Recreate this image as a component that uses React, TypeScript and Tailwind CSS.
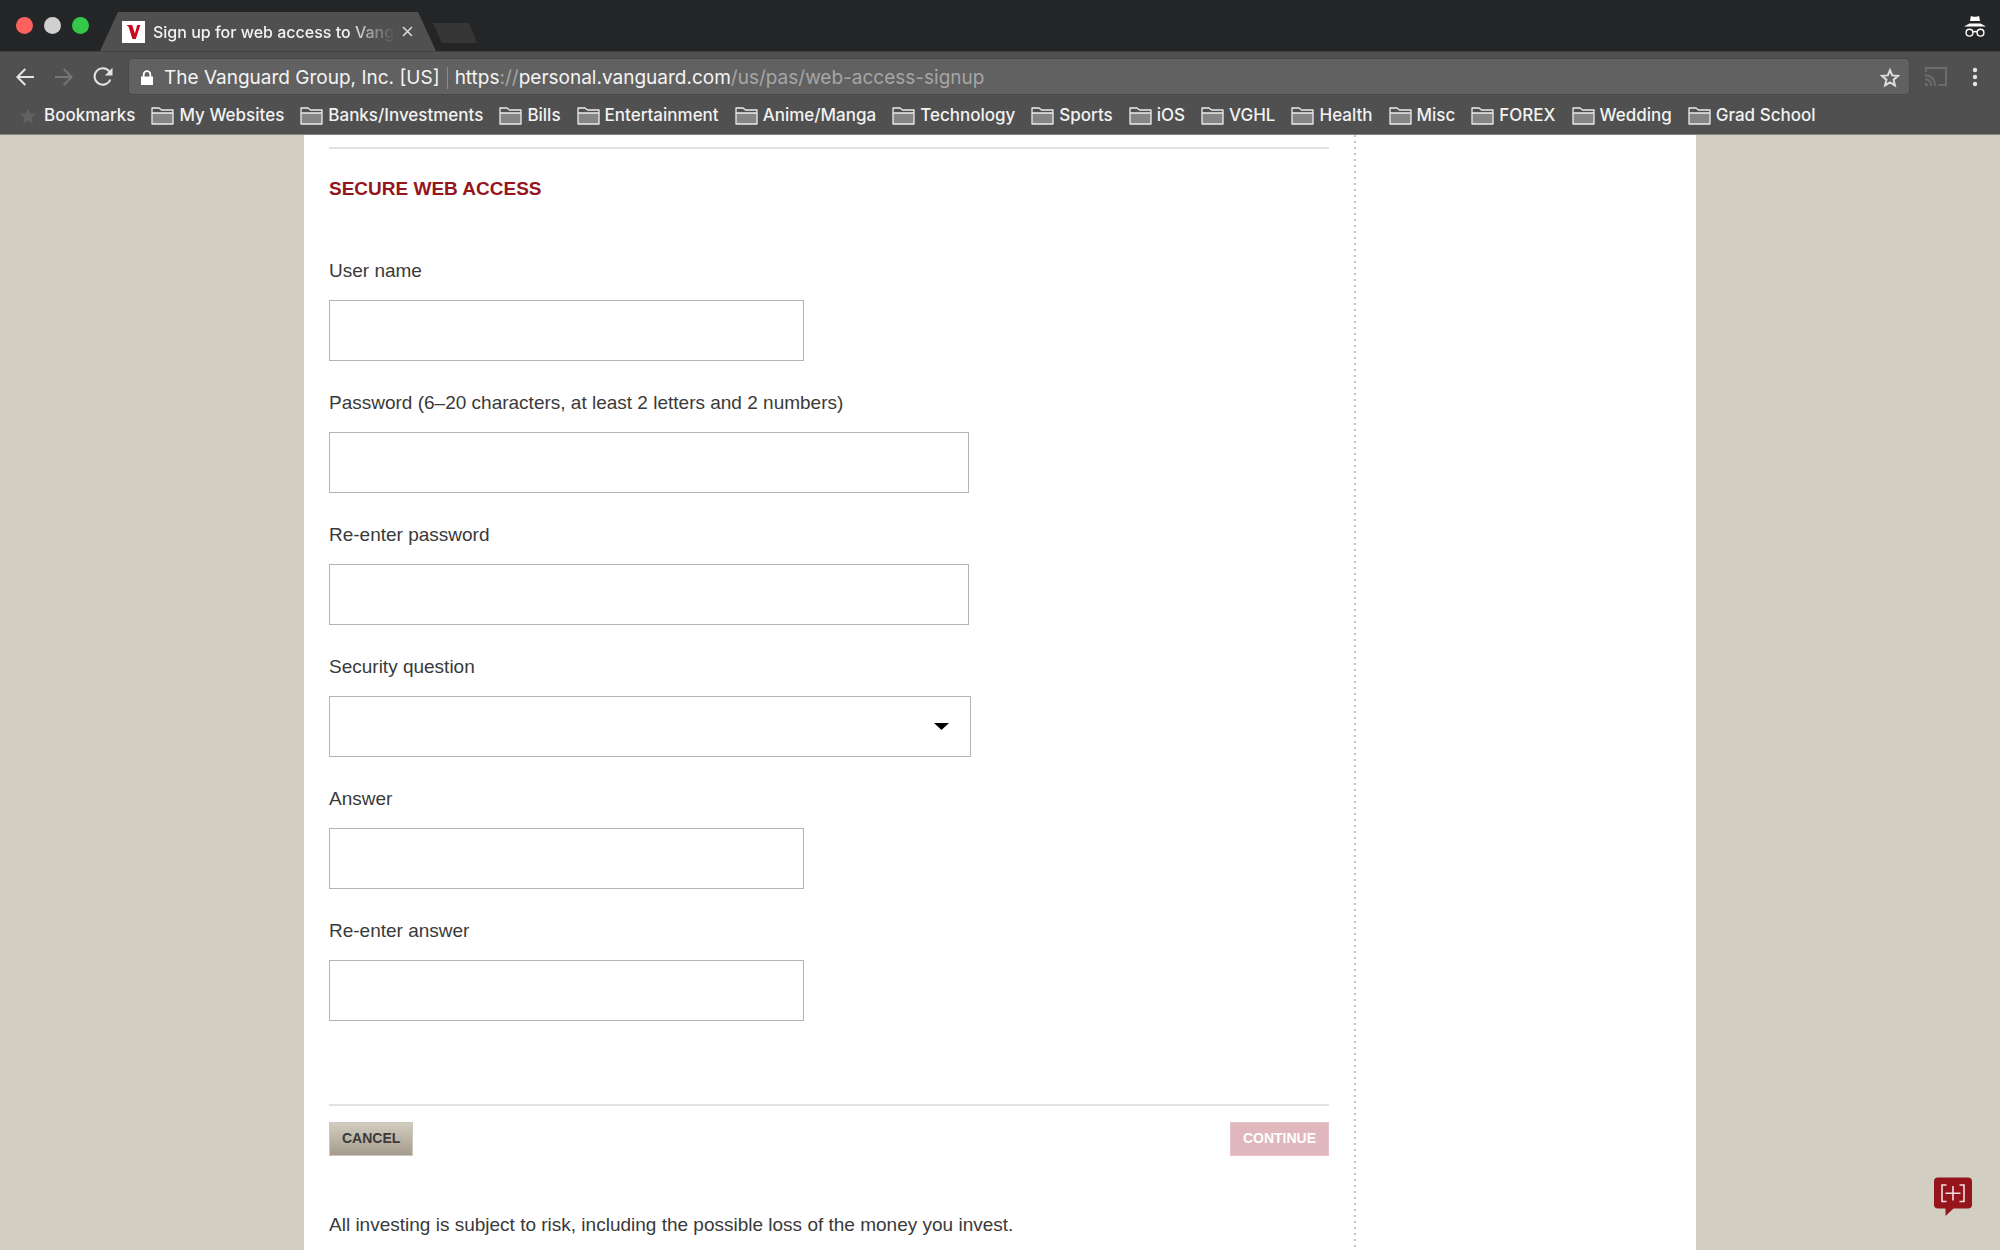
import React from "react";

const folders = [
  "My Websites",
  "Banks/Investments",
  "Bills",
  "Entertainment",
  "Anime/Manga",
  "Technology",
  "Sports",
  "iOS",
  "VGHL",
  "Health",
  "Misc",
  "FOREX",
  "Wedding",
  "Grad School",
];

function FolderIcon() {
  return (
    <svg className="h-[18px] w-[23px] shrink-0" viewBox="0 0 23 18" fill="none" aria-hidden="true">
      <path d="M1 17V1h7l2.500 2H22v14z" fill="#505050" />
      <path d="M1 6h21v11H1z" fill="#858585" />
      <path d="M1 17V1h7l2.500 2H22v14zM1 6h21" stroke="#ececec" strokeWidth="1.300" strokeLinejoin="round" />
    </svg>
  );
}

function StarIcon({ filled = false }: { filled?: boolean }) {
  return (
    <svg
      className={filled ? "h-5 w-5 shrink-0" : "h-5 w-5"}
      viewBox="0 0 20 20"
      fill={filled ? "#616161" : "none"}
      stroke={filled ? "none" : "#dedede"}
      strokeWidth="2"
      aria-hidden="true"
    >
      <path d="M10 2.200l2.200 5.200 5.800.5-4.400 3.800 1.300 5.700-4.900-3-4.900 3 1.300-5.700L2 7.900l5.800-.5z" />
    </svg>
  );
}

function TabStrip() {
  return (
    <header className="flex h-[51px] items-end bg-[#242527]">
      <div className="flex gap-[11px] self-center pl-4">
        <button aria-label="Close window" className="h-[17px] w-[17px] rounded-full bg-[#fc615d]" />
        <button aria-label="Minimize window" className="h-[17px] w-[17px] rounded-full bg-[#d0d0d0]" />
        <button aria-label="Zoom window" className="h-[17px] w-[17px] rounded-full bg-[#34c84a]" />
      </div>
      <div className="ml-[11px] flex h-[39px] w-[336px] items-center bg-[#505050] pr-[23px] pl-[22px] [clip-path:polygon(18px_0,318px_0,336px_100%,0_100%)]">
        <svg className="h-[22px] w-[23px] shrink-0" viewBox="0 0 23 22" aria-hidden="true">
          <path d="M0 0h23v22H0z" fill="#fff" />
          <path d="M5 4h5.200l2.700 8.600L15.200 4H18.400l-4.600 14h-3.400L7 7C6.500 5.500 6 5 5 4.800z" fill="#cb0a1e" />
        </svg>
        <span className="ml-2 w-[242px] overflow-hidden text-base font-medium whitespace-nowrap text-[#f2f2f2] [mask-image:linear-gradient(to_right,black_195px,transparent_242px)]">
          Sign up for web access to Vanguard
        </span>
        <button aria-label="Close tab" className="ml-[7px] shrink-0">
          <svg className="h-[11px] w-[11px]" viewBox="0 0 11 11" stroke="#dcdcdc" strokeWidth="1.500" aria-hidden="true">
            <path d="M1 1l9 9M10 1l-9 9" />
          </svg>
        </button>
      </div>
      <button
        aria-label="New tab"
        className="-ml-[3px] mb-2 h-5 w-[44px] bg-[#363636] [clip-path:polygon(0_0,36px_0,100%_100%,9px_100%)]"
      />
      <svg className="mr-[14px] mb-[14px] ml-auto h-[21px] w-[22px]" viewBox="0 0 22 21" fill="none" aria-label="Incognito">
        <path d="M6 5L6.800.3c1.100-.3 2 .5 4.200.5s3.100-.8 4.200-.5L16 5zM0 10.500l5.500-3h11l5.500 3z" fill="#fff" />
        <circle cx="5.500" cy="16.700" r="3.400" stroke="#fff" strokeWidth="1.400" />
        <circle cx="16.500" cy="16.700" r="3.400" stroke="#fff" strokeWidth="1.400" />
        <path d="M9 16q2-1 4 0" stroke="#fff" strokeWidth="1.400" />
      </svg>
    </header>
  );
}

function Toolbar() {
  return (
    <div className="flex h-11 items-center border-t border-[#414243] pt-[6px]">
      <button aria-label="Back" className="ml-4">
        <svg className="h-[18px] w-[18px]" viewBox="0 0 18 18" fill="none" stroke="#e4e4e4" strokeWidth="2" aria-hidden="true">
          <path d="M18 9H1.500M9.300 1L1.400 9l7.900 8" />
        </svg>
      </button>
      <button aria-label="Forward" className="ml-[21px]">
        <svg className="h-[18px] w-[18px]" viewBox="0 0 18 18" fill="none" stroke="#767676" strokeWidth="2" aria-hidden="true">
          <path d="M0 9h16.500M8.700 1l7.900 8-7.900 8" />
        </svg>
      </button>
      <button aria-label="Reload" className="ml-5">
        <svg className="h-5 w-5" viewBox="0 0 20 20" fill="none" aria-hidden="true">
          <path d="M16.300 4.500A8.200 8.200 0 1 0 17.400 12.500" stroke="#e4e4e4" strokeWidth="2" />
          <path d="M19.500.8v7.700h-7.700z" fill="#e4e4e4" />
        </svg>
      </button>
      <div className="ml-[15px] flex h-[37px] min-w-0 flex-1 items-center rounded-[4px] border border-[#484848] bg-[#616161] pt-[2px] pr-[9px] pl-3">
        <svg className="h-4 w-3 shrink-0" viewBox="0 0 12 16" fill="none" aria-hidden="true">
          <path d="M0 6.500h12V15H0z" fill="#fff" />
          <path d="M2.700 7V4.500a3.300 3.300 0 0 1 6.600 0V7" stroke="#fff" strokeWidth="1.800" />
        </svg>
        <span className="ml-[11px] text-[19px] leading-7 whitespace-nowrap text-[#f4f4f4]">The Vanguard Group, Inc. [US]</span>
        <span className="mx-[7px] h-[22px] w-px bg-[#8c8c8c]" />
        <div
          role="textbox"
          aria-label="Address"
          tabIndex={0}
          className="min-w-0 flex-1 truncate text-[19px] leading-7 text-[#a6a6a6]"
        >
          <span className="text-[#f4f4f4]">https</span>://
          <span className="text-[#f4f4f4]">personal.vanguard.com</span>/us/pas/web-access-signup
        </div>
        <button aria-label="Bookmark this page">
          <StarIcon />
        </button>
      </div>
      <button aria-label="Cast" className="ml-[15px]">
        <svg className="h-[19px] w-[22px]" viewBox="0 0 22 19" fill="none" stroke="#6c6c6c" strokeWidth="2" aria-hidden="true">
          <path d="M1 5V1h20v17h-7.500M0 8.200A10 10 0 0 1 10.200 19M0 12.200a6.200 6.200 0 0 1 6.200 6.800" />
          <path d="M0 15.500a3 3 0 0 1 3 3.500H0z" fill="#6c6c6c" stroke="none" />
        </svg>
      </button>
      <button aria-label="Menu" className="mr-[22px] ml-[25px]">
        <svg className="h-5 w-[6px]" viewBox="0 0 6 20" fill="#e4e4e4" aria-hidden="true">
          <circle cx="3" cy="3" r="2.200" />
          <circle cx="3" cy="10" r="2.200" />
          <circle cx="3" cy="17" r="2.200" />
        </svg>
      </button>
    </div>
  );
}

function BookmarksBar() {
  return (
    <nav
      aria-label="Bookmarks"
      className="flex h-10 items-center gap-4 overflow-hidden border-b border-[#848484] pt-[2px] pl-[18px] text-[17px] font-[450] whitespace-nowrap text-[#f2f2f2]"
    >
      <a href="#bookmarks" className="flex items-center gap-[6px]">
        <StarIcon filled />
        Bookmarks
      </a>
      {folders.map((name) => (
        <a key={name} href="#folder" className="flex items-center gap-[5px]">
          <FolderIcon />
          {name}
        </a>
      ))}
    </nav>
  );
}

function TextField({ id, label, type = "text", wide = false }: { id: string; label: string; type?: string; wide?: boolean }) {
  return (
    <div>
      <label htmlFor={id} className="block leading-6">
        {label}
      </label>
      <input
        id={id}
        type={type}
        className={
          wide
            ? "mt-[17px] block h-[61px] w-full max-w-[640px] border border-[#b4b4b4] bg-white px-4"
            : "mt-[17px] block h-[61px] w-full max-w-[475px] border border-[#b4b4b4] bg-white px-4"
        }
      />
    </div>
  );
}

function SignupForm() {
  return (
    <form onSubmit={(e) => e.preventDefault()}>
      <h1 className="mt-7 text-[19px] leading-6 font-bold text-[#96151d]">SECURE WEB ACCESS</h1>
      <div className="mt-[58px] flex flex-col gap-[30px]">
        <TextField id="user" label="User name" />
        <TextField id="password" type="password" label="Password (6–20 characters, at least 2 letters and 2 numbers)" wide />
        <TextField id="password-again" type="password" label="Re-enter password" wide />
        <div>
          <label htmlFor="question" className="block leading-6">
            Security question
          </label>
          <div className="relative mt-[17px] max-w-[642px]">
            <select id="question" className="block h-[61px] w-full appearance-none border border-[#b4b4b4] bg-white px-4">
              <option />
            </select>
            <svg className="pointer-events-none absolute top-[27px] right-[22px] h-[7px] w-[15px]" viewBox="0 0 15 7" aria-hidden="true">
              <path d="M0 0h15L7.500 7z" fill="#000" />
            </svg>
          </div>
        </div>
        <TextField id="answer" label="Answer" />
        <TextField id="answer-again" label="Re-enter answer" />
      </div>
      <div className="mt-[83px] flex items-center justify-between border-t-2 border-[#e2e2e2] pt-4 text-sm font-bold">
        <button
          type="button"
          className="h-[34px] border border-[#cdc8bc] bg-linear-to-b from-[#d2cdc0] to-[#a69c8e] px-3 pb-[2px] text-[#3a3a3a]"
        >
          CANCEL
        </button>
        <button type="submit" className="h-[34px] border border-[#e6c3c7] bg-[#dfb7bc] px-3 pb-[2px] text-white">
          CONTINUE
        </button>
      </div>
    </form>
  );
}

export default function App() {
  return (
    <div className="flex min-h-screen flex-col bg-[#d3cec2] font-['Inter',sans-serif]">
      <div className="bg-[#505050]">
        <TabStrip />
        <Toolbar />
        <BookmarksBar />
      </div>
      <main className="mx-auto flex w-full max-w-[1392px] flex-1 bg-white pl-[25px] font-['Liberation_Sans',Arial,sans-serif] text-[19px] text-[#3a3a3a]">
        <div className="min-w-0 flex-1 pt-3 pr-[25px]">
          <hr className="border-t-2 border-[#e2e2e2]" />
          <SignupForm />
          <p className="mt-[57px] leading-6">
            All investing is subject to risk, including the possible loss of the money you invest.
          </p>
        </div>
        <aside className="w-[342px] shrink-0 bg-[linear-gradient(#c4c4c4_2px,transparent_2px)] bg-[length:2px_6px] bg-repeat-y" />
      </main>
      <button aria-label="Feedback" className="fixed right-[27px] bottom-[33px]">
        <svg className="h-10 w-10" viewBox="0 0 40 40" fill="none" aria-hidden="true">
          <path d="M5 .5h30a4 4 0 0 1 4 4v23a4 4 0 0 1-4 4H20.500L12.500 39v-7.500H5a4 4 0 0 1-4-4v-23a4 4 0 0 1 4-4z" fill="#96151d" />
          <path d="M13.500 8H9v16.500h4.500M26.500 8H31v16.500h-4.500M20 9v14.500M12.500 16.300h15" stroke="#f3dfe0" strokeWidth="1.600" />
        </svg>
      </button>
    </div>
  );
}
